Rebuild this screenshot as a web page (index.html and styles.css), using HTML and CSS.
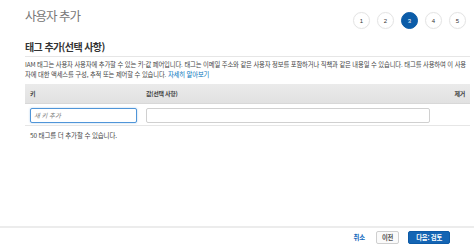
FILE: index.html
```html
<!DOCTYPE html>
<html lang="ko">
<head>
    <meta charset="UTF-8">
    <meta name="viewport" content="width=device-width, initial-scale=1.0">
    <title>사용자 추가</title>
    <link rel="stylesheet" href="styles.css">
</head>
<body>
    <div class="page">

        <!-- 상단: 제목 + 단계 -->
        <header class="top">
            <h1 class="title">사용자 추가</h1>
            <ol class="steps">
                <li>1</li>
                <li>2</li>
                <li class="current">3</li>
                <li>4</li>
                <li>5</li>
            </ol>
        </header>

        <!-- 태그 영역 -->
        <section class="content">
            <h2 class="section-title">태그 추가(선택 사항)</h2>
            <p class="desc">
                <span class="line">IAM 태그는 사용자 사용자에 추가할 수 있는 키-값 페어입니다. 태그는 이메일 주소와 같은 사용자 정보를 포함하거나 직책과 같은 내용일 수 있습니다. 태그를 사용하여 이 사용</span>
                <span class="line">자에 대한 액세스를 구성, 추적 또는 제어할 수 있습니다. <a href="#">자세히 알아보기</a></span>
            </p>

            <div class="tag-table">
                <div class="thead">
                    <span class="cell">키</span>
                    <span class="cell">값(선택 사항)</span>
                    <span class="cell del">제거</span>
                </div>
                <div class="trow">
                    <div class="cell"><input type="text" class="field focused" placeholder="새 키 추가"></div>
                    <div class="cell"><input type="text" class="field"></div>
                    <div class="cell"></div>
                </div>
            </div>

            <p class="remaining">50 태그를 더 추가할 수 있습니다.</p>
        </section>

        <!-- 하단 버튼 -->
        <footer class="actions">
            <a href="#" class="cancel">취소</a>
            <button class="btn">이전</button>
            <button class="btn primary">다음: 검토</button>
        </footer>
    </div>
</body>
</html>
```

FILE: styles.css
```css
body {
    margin: 0;
    font-family: "Noto Sans CJK KR", "Liberation Sans", sans-serif;
    color: #444;
    background: #fff;
}
.page {
    display: flex;
    flex-direction: column;
    height: 249px;
    overflow: hidden;
}
/* 상단 */
.top {
    height: 40px;
    box-sizing: border-box;
    padding: 8px 8px 0 25px;
    display: flex;
    justify-content: space-between;
    align-items: flex-start;
}
.title {
    margin: 0;
    font-size: 12.5px;
    line-height: 16px;
    font-weight: normal;
    letter-spacing: -1px;
    color: #777;
}
.steps {
    list-style: none;
    margin: 4px 0 0 0;
    padding: 0;
    display: flex;
    gap: 7px;
}
.steps li {
    width: 15px;
    height: 15px;
    border: 1px solid #e4e4e4;
    border-radius: 50%;
    display: flex;
    align-items: center;
    justify-content: center;
    font-size: 6px;
    font-family: "Liberation Sans", sans-serif;
    color: #333;
    box-shadow: 0 0 1px rgba(0, 0, 0, 0.05);
}
.steps li.current {
    background: #0b5ca8;
    border-color: #0b5ca8;
    color: #fff;
}
/* 내용 */
.content {
    padding: 0 4px 0 25px;
}
.section-title {
    margin: 0;
    font-size: 10px;
    line-height: 14px;
    font-weight: bold;
    letter-spacing: -0.6px;
    color: #333;
    padding-bottom: 2px;
    border-bottom: 1px solid #e6e6e6;
}
.desc {
    margin: 3px 0 4px 0;
    font-size: 6.3px;
    line-height: 10px;
    letter-spacing: -0.12px;
    color: #444;
}
.desc .line {
    display: block;
    white-space: nowrap;
}
.desc a {
    color: #0073bb;
    text-decoration: none;
}
.tag-table .thead,
.tag-table .trow {
    display: grid;
    grid-template-columns: 116px 1fr 40px;
}
.thead {
    height: 20px;
    align-items: center;
    background: linear-gradient(#ebebeb, #e1e1e1);
    border-bottom: 1px solid #d8d8d8;
    box-sizing: border-box;
    font-size: 6px;
    font-weight: bold;
    letter-spacing: -0.3px;
    color: #444;
}
.thead .cell {
    padding-left: 5px;
}
.thead .del {
    text-align: right;
    padding: 0 5px 0 0;
}
.trow {
    padding: 4px 0 2px 0;
    border-bottom: 1px solid #e6e6e6;
}
.trow .cell {
    padding-left: 5px;
}
.field {
    display: block;
    width: 100%;
    height: 15px;
    box-sizing: border-box;
    border: 1px solid #d0d0d0;
    border-radius: 2px;
    padding: 0 3px;
    font-family: inherit;
    font-size: 6.3px;
    outline: none;
}
.trow .cell:first-child .field {
    width: 107px;
}
.field.focused {
    border-color: #4f95d8;
    box-shadow: 0 0 2px rgba(79, 149, 216, 0.5);
}
.field::placeholder {
    font-style: italic;
    color: #777;
}
.remaining {
    margin: 4px 0 0 5px;
    font-size: 6.5px;
    line-height: 10px;
    letter-spacing: -0.15px;
    color: #444;
}
/* 하단 */
.actions {
    margin-top: auto;
    height: 23px;
    box-sizing: border-box;
    border-top: 2px solid #ececec;
    padding: 0 24px 2px 0;
    display: flex;
    justify-content: flex-end;
    align-items: center;
}
.cancel {
    font-size: 6.3px;
    font-weight: bold;
    color: #1166bb;
    text-decoration: none;
    margin-right: 11px;
}
.btn {
    height: 13px;
    padding: 0 5px;
    border: 1px solid #cfcfcf;
    border-radius: 2px;
    background: #fafafa;
    font-family: inherit;
    font-size: 6.3px;
    font-weight: bold;
    letter-spacing: -0.2px;
    color: #555;
    cursor: pointer;
}
.btn.primary {
    margin-left: 9px;
    padding: 0 7px;
    background: #1465b4;
    border-color: #0d5aa6;
    color: #fff;
}
```
